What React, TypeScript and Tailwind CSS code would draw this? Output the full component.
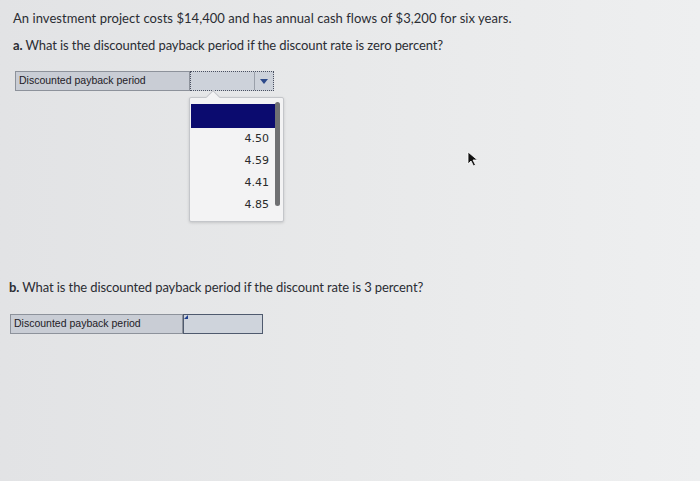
import React from "react";

export default function App() {
  return (
    <div
      className="relative w-[700px] h-[481px] overflow-hidden bg-gradient-to-r from-[#e2e3e5] via-[#e8e9ea] to-[#eeeff0] text-[#2b2d33]"
      style={{ fontFamily: 'Lato, "Liberation Sans", Arial, sans-serif' }}
    >
      <div className="flex flex-col pt-[10px]">
        <p className="ml-[13px] text-[13px] leading-[17px] tracking-[0.05px]">
          An investment project costs $14,400 and has annual cash flows of $3,200 for six years.
        </p>
        <p className="ml-[13px] mt-[10px] text-[13px] leading-[17px] tracking-[-0.1px]">
          <span className="font-bold">a.</span> What is the discounted payback period if the discount rate is zero percent?
        </p>

        <div className="relative ml-[15px] mt-[17px] flex h-[20px] w-[259px]" style={{ fontFamily: '"Liberation Sans", Arial, sans-serif' }}>
          <div className="flex w-[175px] items-center border border-[#8d929b] bg-[#c9cdd5] pl-[3px] text-[10.5px] text-[#1e2026]">
            Discounted payback period
          </div>
          <div className="flex flex-1 items-center justify-end border border-dotted border-[#4a5060] bg-[#cdd2da]">
            <div className="flex h-full w-[19px] items-center justify-center border-l border-[#9aa0aa]">
              <svg width="8" height="5" viewBox="0 0 8 5">
                <path d="M0 0 L8 0 L4 5 Z" fill="#2d4a8a" />
              </svg>
            </div>
          </div>

          <div className="absolute left-[174px] top-[26px] h-[125px] w-[95px] rounded-[2px] border border-[#c4c6ca] bg-[#f3f3f4] shadow-[0_1px_3px_rgba(0,0,0,0.15)]">
            <div className="absolute -top-[6px] left-[18px] h-[10px] w-[10px] rotate-45 border-l border-t border-[#c4c6ca] bg-[#f3f3f4]" />
            <div className="relative mt-[6px] ml-[1px] h-[24px] w-[86px] bg-[#0b0b6f]" />
            <div
              className="relative flex w-[79px] flex-col items-end text-[11px] leading-[22px] text-[#2a2a2a]"
              style={{ fontFamily: '"DejaVu Sans", Verdana, sans-serif' }}
            >
              <span>4.50</span>
              <span>4.59</span>
              <span>4.41</span>
              <span>4.85</span>
            </div>
            <div className="absolute right-[3px] top-[4px] h-[104px] w-[5px] rounded-full bg-[#6f7072]" />
          </div>
        </div>

        <p className="ml-[9px] mt-[188px] text-[13px] leading-[17px] tracking-[-0.1px]">
          <span className="font-bold">b.</span> What is the discounted payback period if the discount rate is 3 percent?
        </p>

        <div className="ml-[10px] mt-[18px] flex h-[20px] w-[253px]" style={{ fontFamily: '"Liberation Sans", Arial, sans-serif' }}>
          <div className="flex w-[173px] items-center border border-[#8d929b] bg-[#c9cdd5] pl-[3px] text-[10.5px] text-[#1e2026]">
            Discounted payback period
          </div>
          <div className="relative flex-1 border border-[#4f5a6e] bg-[#cfd4dc]">
            <div className="absolute left-0 top-0 h-0 w-0 border-l-[4px] border-t-[4px] border-l-transparent border-t-[#1f3f8f] rotate-90" />
          </div>
        </div>
      </div>

      <svg className="absolute left-[467px] top-[151px]" width="12" height="16" viewBox="0 0 12 16">
        <path d="M1 1 L1 13 L4 10 L6.5 15 L8.5 14 L6 9 L10.5 9 Z" fill="#111" stroke="#fff" strokeWidth="0.8" />
      </svg>
    </div>
  );
}
